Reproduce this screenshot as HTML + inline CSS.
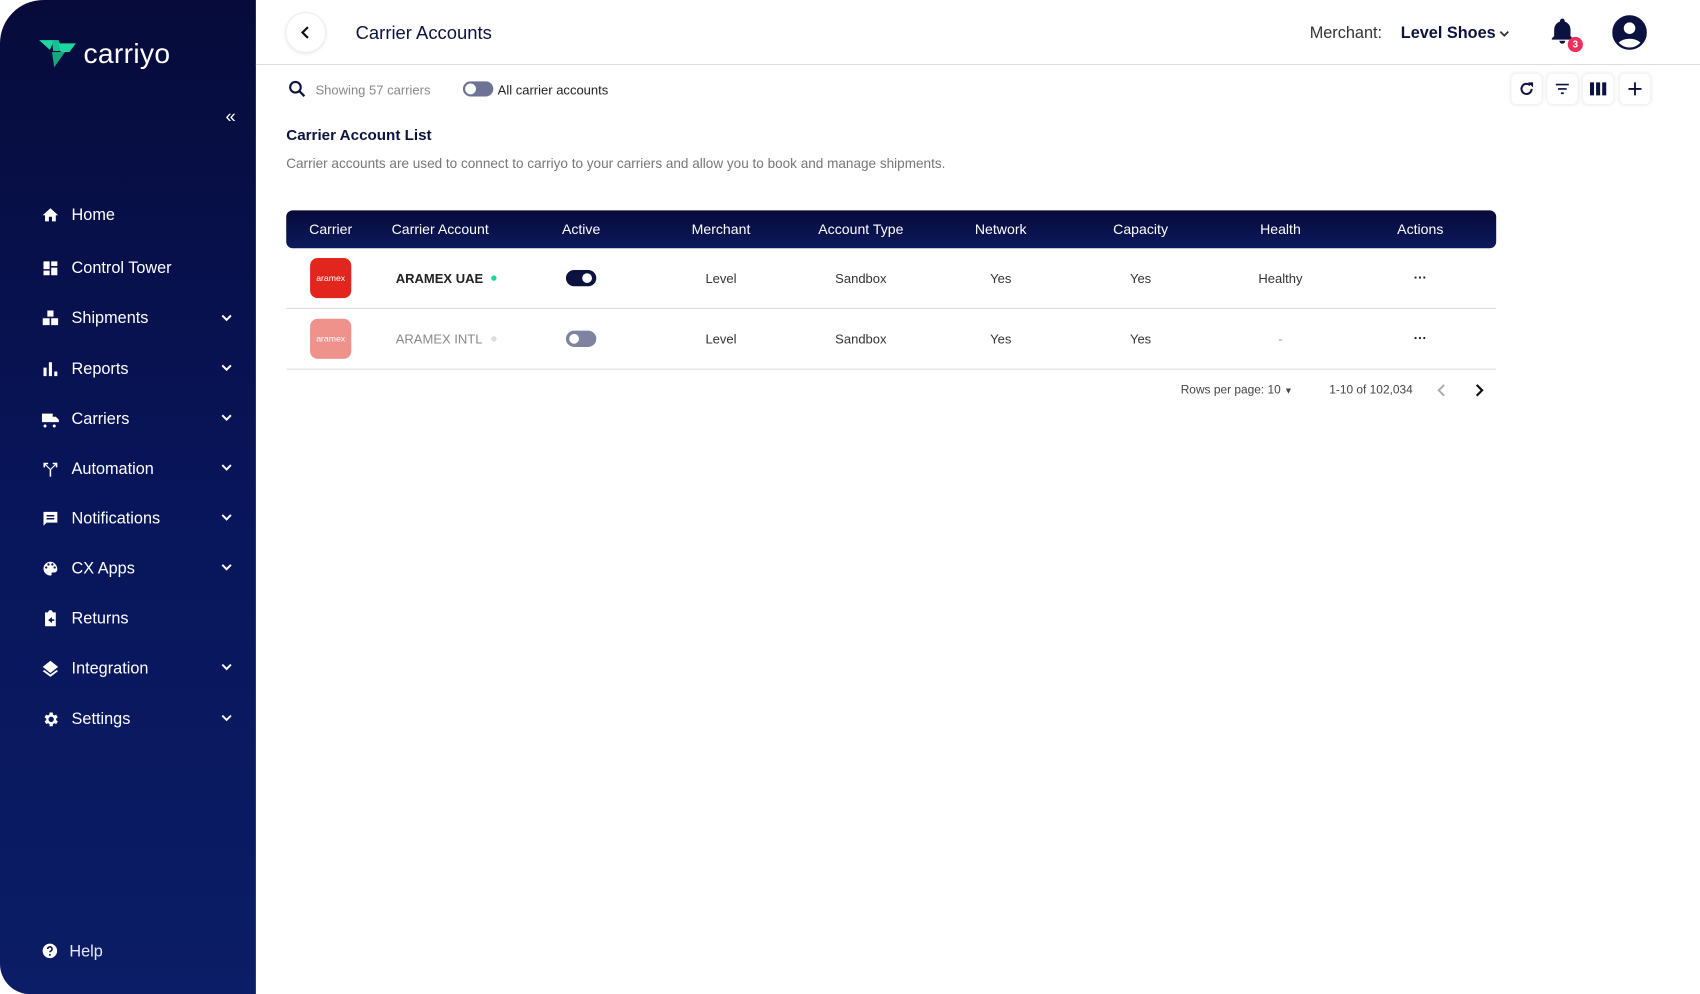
<!DOCTYPE html>
<html><head><meta charset="utf-8"><style>
*{margin:0;padding:0;box-sizing:border-box}
html,body{width:1700px;height:994px;overflow:hidden;background:#fff;font-family:"Liberation Sans",sans-serif}
#w{position:absolute;left:0;top:0;width:1568px;height:917px;transform:scale(1.0842);transform-origin:0 0}
.a{position:absolute}
#sb{left:0;top:0;width:236px;height:917px;background:linear-gradient(180deg,#060b3a 0%,#08155a 50%,#0b1d66 100%);border-radius:40px 0 0 28px}
.mi{position:absolute;left:38px;color:#fff;font-size:15px;display:flex;align-items:center;height:20px}
.mi svg{width:17px;height:17px;margin-right:11px;fill:#fff}
.ch{position:absolute;left:203px;width:12px;height:8px}
.th{position:absolute;top:0;height:35px;line-height:35px;color:#fff;font-size:13px;transform:translateX(-50%);white-space:nowrap}
.td{position:absolute;font-size:12px;color:#333;transform:translate(-50%,-50%);white-space:nowrap}
.ib{position:absolute;top:68px;width:28px;height:28px;background:#fff;border-radius:5px;box-shadow:0 0 4px rgba(0,0,0,.12);display:flex;align-items:center;justify-content:center}
</style></head><body><div id="w">
<div id="sb" class="a"></div>
<svg class="a" style="left:36px;top:36px" width="36" height="28" viewBox="0 0 36 28"><path d="M0 1h14l-4 9z" fill="#1fd6a0"/><path d="M12 1l6 0 4 10h-9z" fill="#19c08f"/><path d="M18 4h16l-6 8h-8z" fill="#1fd6a0"/><path d="M12 12h12l-10 14z" fill="#15a87c"/></svg>
<div class="a" style="left:77px;top:34px;color:#fff;font-size:26px;letter-spacing:0.3px">carriyo</div>
<div class="a" style="left:208px;top:98px;color:#fff;font-size:17px">«</div>

<div class="mi" style="top:188px"><svg viewBox="0 0 24 24"><path d="M10 20v-6h4v6h5v-8h3L12 3 2 12h3v8z"/></svg>Home</div>
<div class="mi" style="top:237px"><svg viewBox="0 0 24 24"><path d="M3 13h8V3H3zm0 8h8v-6H3zm10 0h8V11h-8zm0-18v6h8V3z"/></svg>Control Tower</div>
<div class="mi" style="top:283px"><svg viewBox="0 0 24 24"><path d="M8 2h8v8H8zM2 12h9v9H2zm11 0h9v9h-9z"/></svg>Shipments</div>
<div class="mi" style="top:330px"><svg viewBox="0 0 24 24"><path d="M3 10h4v11H3zm7-7h4v18h-4zm7 12h4v6h-4z"/></svg>Reports</div>
<div class="mi" style="top:376px"><svg viewBox="0 0 24 24"><path d="M1 5h14v11H1zm14 4h4l4 4v3h-8zM5 19a2 2 0 1 0 .01 0zm12 0a2 2 0 1 0 .01 0z"/></svg>Carriers</div>
<div class="mi" style="top:422px"><svg viewBox="0 0 24 24"><path d="M11 22h2v-9l6-6v3h2V4h-6v2h3l-6 6-6-6h3V4H3v6h2V7l6 6z"/></svg>Automation</div>
<div class="mi" style="top:468px"><svg viewBox="0 0 24 24"><path d="M3 3h18v14H7l-4 4zm4 4v2h10V7zm0 4v2h10v-2z"/></svg>Notifications</div>
<div class="mi" style="top:514px"><svg viewBox="0 0 24 24"><path d="M12 3a9 9 0 0 0 0 18c1.5 0 2-1 1.5-2s0-2 1.5-2h2a4 4 0 0 0 4-4c0-5.5-4-10-9-10zM6.5 12a1.5 1.5 0 1 1 0-3 1.5 1.5 0 0 1 0 3zm3-4a1.5 1.5 0 1 1 0-3 1.5 1.5 0 0 1 0 3zm5 0a1.5 1.5 0 1 1 0-3 1.5 1.5 0 0 1 0 3zm3 4a1.5 1.5 0 1 1 0-3 1.5 1.5 0 0 1 0 3z"/></svg>CX Apps</div>
<div class="mi" style="top:560px"><svg viewBox="0 0 24 24"><path d="M5 4h4a3 3 0 0 1 6 0h4v18H5zm9 6l-5 4 5 4v-3h3v-2h-3z"/></svg>Returns</div>
<div class="mi" style="top:606px"><svg viewBox="0 0 24 24"><path d="M12 2L2 10l10 8 10-8zm0 18l-8-6-2 1.5L12 23l10-7.5-2-1.5z"/></svg>Integration</div>
<div class="mi" style="top:653px"><svg viewBox="0 0 24 24"><path d="M19.4 13a7.5 7.5 0 0 0 0-2l2.1-1.6-2-3.5-2.5 1a7 7 0 0 0-1.7-1L15 3h-4l-.4 2.9a7 7 0 0 0-1.7 1l-2.5-1-2 3.5L6.6 11a7.5 7.5 0 0 0 0 2l-2.1 1.6 2 3.5 2.5-1a7 7 0 0 0 1.7 1L11 21h4l.4-2.9a7 7 0 0 0 1.7-1l2.5 1 2-3.5zM13 15.5a3.5 3.5 0 1 1 0-7 3.5 3.5 0 0 1 0 7z"/></svg>Settings</div>
<svg class="ch" style="top:289px" viewBox="0 0 12 8"><path d="M2 2l4 4 4-4" stroke="#fff" stroke-width="1.8" fill="none"/></svg>
<svg class="ch" style="top:335px" viewBox="0 0 12 8"><path d="M2 2l4 4 4-4" stroke="#fff" stroke-width="1.8" fill="none"/></svg>
<svg class="ch" style="top:381px" viewBox="0 0 12 8"><path d="M2 2l4 4 4-4" stroke="#fff" stroke-width="1.8" fill="none"/></svg>
<svg class="ch" style="top:427px" viewBox="0 0 12 8"><path d="M2 2l4 4 4-4" stroke="#fff" stroke-width="1.8" fill="none"/></svg>
<svg class="ch" style="top:473px" viewBox="0 0 12 8"><path d="M2 2l4 4 4-4" stroke="#fff" stroke-width="1.8" fill="none"/></svg>
<svg class="ch" style="top:519px" viewBox="0 0 12 8"><path d="M2 2l4 4 4-4" stroke="#fff" stroke-width="1.8" fill="none"/></svg>
<svg class="ch" style="top:611px" viewBox="0 0 12 8"><path d="M2 2l4 4 4-4" stroke="#fff" stroke-width="1.8" fill="none"/></svg>
<svg class="ch" style="top:658px" viewBox="0 0 12 8"><path d="M2 2l4 4 4-4" stroke="#fff" stroke-width="1.8" fill="none"/></svg>
<div class="mi" style="top:867px;left:38px;color:#e6e8f5"><svg viewBox="0 0 24 24" style="width:16px;height:16px;margin-right:10px"><circle cx="12" cy="12" r="10" fill="#fff"/><path d="M9 9.5a3 3 0 1 1 4 2.8c-.8.4-1 .9-1 1.7" stroke="#08155a" stroke-width="2.2" fill="none"/><circle cx="12" cy="17.5" r="1.3" fill="#08155a"/></svg>Help</div>

<!-- header -->
<div class="a" style="left:263px;top:11px;width:38px;height:38px;border-radius:50%;border:1px solid #ececec;box-shadow:0 1px 3px rgba(0,0,0,.08)"></div>
<svg class="a" style="left:276px;top:24px" width="12" height="12" viewBox="0 0 12 12"><path d="M8 1L3 6l5 5" stroke="#111" stroke-width="2" fill="none"/></svg>
<div class="a" style="left:328px;top:21px;font-size:17px;color:#0b1240">Carrier Accounts</div>
<div class="a" style="left:236px;top:59px;width:1332px;height:1px;background:#ddd"></div>
<div class="a" style="left:1208px;top:22px;font-size:15px;color:#333">Merchant:</div>
<div class="a" style="left:1292px;top:22px;font-size:15px;color:#0b1240;font-weight:bold">Level Shoes</div>
<svg class="a" style="left:1382px;top:27px" width="11" height="8" viewBox="0 0 12 8"><path d="M2 2l4 4 4-4" stroke="#333" stroke-width="1.8" fill="none"/></svg>
<svg class="a" style="left:1428px;top:15px" width="26" height="28" viewBox="0 0 24 26"><path d="M12 2a2 2 0 0 1 2 2v.5A7 7 0 0 1 19 11v6l2 2v1H3v-1l2-2v-6a7 7 0 0 1 5-6.5V4a2 2 0 0 1 2-2zm-2.5 19h5a2.5 2.5 0 0 1-5 0z" fill="#0b1240"/></svg>
<div class="a" style="left:1446px;top:34px;width:14px;height:14px;border-radius:50%;background:#ec2f5c;color:#fff;font-size:9px;text-align:center;line-height:14px;font-weight:bold">3</div>
<svg class="a" style="left:1487px;top:14px" width="32" height="32" viewBox="0 0 24 24"><circle cx="12" cy="12" r="12" fill="#0b1240"/><circle cx="12" cy="9" r="4" fill="#fff"/><path d="M4.5 19a9 6 0 0 1 15 0a10 10 0 0 1-15 0z" fill="#fff"/></svg>

<!-- toolbar -->
<svg class="a" style="left:265px;top:73px" width="18" height="18" viewBox="0 0 24 24"><circle cx="10" cy="10" r="6.5" stroke="#0b1240" stroke-width="2.6" fill="none"/><path d="M15 15l6 6" stroke="#0b1240" stroke-width="2.8"/></svg>
<div class="a" style="left:291px;top:76px;font-size:12px;color:#888">Showing 57 carriers</div>
<div class="a" style="left:427px;top:75px;width:28px;height:14px;border-radius:7px;background:#6e7396"></div>
<div class="a" style="left:429px;top:77px;width:10px;height:10px;border-radius:50%;background:#fff"></div>
<div class="a" style="left:459px;top:76px;font-size:12px;color:#222">All carrier accounts</div>
<div class="ib" style="left:1394px"><svg width="16" height="16" viewBox="0 0 24 24"><path d="M19 12a7 7 0 1 1-2.1-5" stroke="#0b1240" stroke-width="2.8" fill="none"/><path d="M14 3h7v7z" fill="#0b1240"/></svg></div>
<div class="ib" style="left:1427px"><svg width="16" height="16" viewBox="0 0 24 24"><path d="M3 6h18M6 12h12M10 18h4" stroke="#0b1240" stroke-width="2.3"/></svg></div>
<div class="ib" style="left:1460px"><svg width="18" height="16" viewBox="0 0 24 20"><path d="M2 2h5v16H2zm7.5 0h5v16h-5zm7.5 0h5v16h-5z" fill="#0b1240"/></svg></div>
<div class="ib" style="left:1494px"><svg width="16" height="16" viewBox="0 0 24 24"><path d="M12 3v18M3 12h18" stroke="#0b1240" stroke-width="2.6"/></svg></div>

<div class="a" style="left:264px;top:116px;font-size:14px;font-weight:bold;color:#0b1240">Carrier Account List</div>
<div class="a" style="left:264px;top:144px;font-size:12.5px;color:#777">Carrier accounts are used to connect to carriyo to your carriers and allow you to book and manage shipments.</div>

<!-- table -->
<div class="a" style="left:264px;top:194px;width:1116px;height:35px;border-radius:6px;background:linear-gradient(180deg,#06093a,#0c1a5c)">
<div class="th" style="left:41px">Carrier</div>
<div class="th" style="left:142px">Carrier Account</div>
<div class="th" style="left:272px">Active</div>
<div class="th" style="left:401px">Merchant</div>
<div class="th" style="left:530px">Account Type</div>
<div class="th" style="left:659px">Network</div>
<div class="th" style="left:788px">Capacity</div>
<div class="th" style="left:917px">Health</div>
<div class="th" style="left:1046px">Actions</div>
</div>
<div class="a" style="left:286px;top:238px;width:38px;height:37px;border-radius:7px;background:#e2261d;color:#fff;font-size:8px;text-align:center;line-height:37px">aramex</div>
<div class="a" style="left:365px;top:250px;font-size:12px;font-weight:bold;color:#222">ARAMEX UAE</div>
<div class="a" style="left:453px;top:254px;width:5px;height:5px;border-radius:50%;background:#1fd6a0"></div>
<div class="a" style="left:522px;top:249px;width:28px;height:15px;border-radius:8px;background:#0b1240"></div>
<div class="a" style="left:537px;top:252px;width:9px;height:9px;border-radius:50%;background:#fff"></div>
<div class="td" style="left:665px;top:257px">Level</div>
<div class="td" style="left:794px;top:257px">Sandbox</div>
<div class="td" style="left:923px;top:257px">Yes</div>
<div class="td" style="left:1052px;top:257px">Yes</div>
<div class="td" style="left:1181px;top:257px">Healthy</div>
<div class="td" style="left:1310px;top:256px;font-weight:bold;color:#0b1240">···</div>
<div class="a" style="left:264px;top:284px;width:1116px;height:1px;background:#ddd"></div>

<div class="a" style="left:286px;top:294px;width:38px;height:37px;border-radius:7px;background:#f0928c;color:#fff;font-size:8px;text-align:center;line-height:37px">aramex</div>
<div class="a" style="left:365px;top:306px;font-size:12px;color:#888">ARAMEX INTL</div>
<div class="a" style="left:453px;top:310px;width:5px;height:5px;border-radius:50%;background:#ddd"></div>
<div class="a" style="left:522px;top:305px;width:28px;height:15px;border-radius:8px;background:#80839f"></div>
<div class="a" style="left:525px;top:308px;width:9px;height:9px;border-radius:50%;background:#fff"></div>
<div class="td" style="left:665px;top:313px">Level</div>
<div class="td" style="left:794px;top:313px">Sandbox</div>
<div class="td" style="left:923px;top:313px">Yes</div>
<div class="td" style="left:1052px;top:313px">Yes</div>
<div class="td" style="left:1181px;top:313px;color:#999">-</div>
<div class="td" style="left:1310px;top:312px;font-weight:bold;color:#0b1240">···</div>
<div class="a" style="left:264px;top:340px;width:1116px;height:1px;background:#ddd"></div>

<div class="a" style="left:1089px;top:354px;font-size:11px;color:#444">Rows per page: 10 <span style="font-size:8px">▼</span></div>
<div class="a" style="left:1226px;top:354px;font-size:11px;color:#444">1-10 of 102,034</div>
<svg class="a" style="left:1325px;top:354px" width="10" height="12" viewBox="0 0 10 12"><path d="M7 1L2 6l5 5" stroke="#aaa" stroke-width="1.8" fill="none"/></svg>
<svg class="a" style="left:1359px;top:354px" width="10" height="12" viewBox="0 0 10 12"><path d="M3 1l5 5-5 5" stroke="#111" stroke-width="2" fill="none"/></svg>
</div></body></html>
